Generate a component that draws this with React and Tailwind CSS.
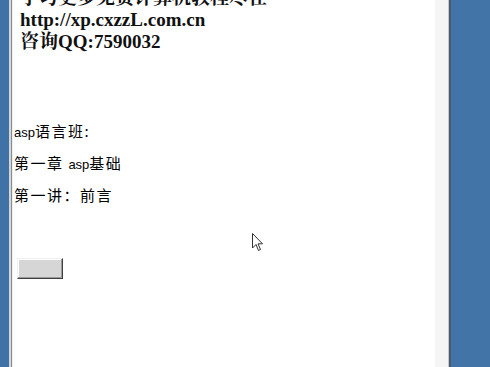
import React from 'react';

const serif = { fontFamily: '"Liberation Serif", "Noto Serif CJK SC", "Noto Sans CJK SC", serif' };
const cjk = { fontFamily: '"Noto Sans CJK SC", "DejaVu Sans", sans-serif' };
const latin = { fontFamily: '"Liberation Sans", "DejaVu Sans", sans-serif' };

const Asp = () => (
  <span className="text-[13px] tracking-normal" style={latin}>
    asp
  </span>
);

const App = () => {
  return (
    <div className="relative flex h-[367px] w-[490px] overflow-hidden bg-white">
      <div className="w-[9px] bg-[#3f73a8]" />
      <div className="w-[2px] bg-[#d6d6d6]" />
      <div className="w-[1px] bg-[#8a8a8a]" />
      <div className="w-[1px] bg-[#efefef]" />

      <div className="flex flex-1 flex-col">
        <div
          className="mt-[-13px] pl-[7px] text-[19px] leading-[22px] font-bold text-[#111]"
          style={serif}
        >
          <div className="whitespace-nowrap">学习更多免费计算机教程尽在</div>
          <div>http://xp.cxzzL.com.cn</div>
          <div>咨询QQ:7590032</div>
        </div>

        <div
          className="mt-[68px] flex flex-col gap-[10px] pl-[1px] text-[15px] leading-[20px] tracking-[1.5px] text-black"
          style={cjk}
        >
          <div>
            <Asp />
            语言班:
          </div>
          <div>
            第一章&nbsp;
            <Asp />
            基础
          </div>
          <div>第一讲：前言</div>
        </div>

        <div className="mt-[53px] pl-[4px]">
          <button
            type="button"
            className="h-[21px] w-[46px] border border-t-[#f0f0f0] border-l-[#f0f0f0] border-r-[#404040] border-b-[#404040] bg-[#d6d6d6] shadow-[inset_-1px_-1px_0_#9a9a9a,inset_1px_1px_0_#ffffff]"
          />
        </div>
      </div>

      <div className="w-[13px] bg-[#f5f5f5]" />
      <div className="w-[1px] bg-[#c8c8c8]" />
      <div className="w-[2px] bg-[#4c5a6c]" />
      <div className="w-[39px] bg-[#4274a8]" />

      <svg
        className="absolute left-[252px] top-[233px]"
        width="12"
        height="19"
        viewBox="0 0 12 19"
      >
        <path
          d="M0.5 0.5 L0.5 15 L4 11.5 L6.5 17.5 L8.5 16.5 L6 10.8 L10.5 10.8 Z"
          fill="#fff"
          stroke="#333"
          strokeWidth="1"
        />
      </svg>
    </div>
  );
};

export default App;
